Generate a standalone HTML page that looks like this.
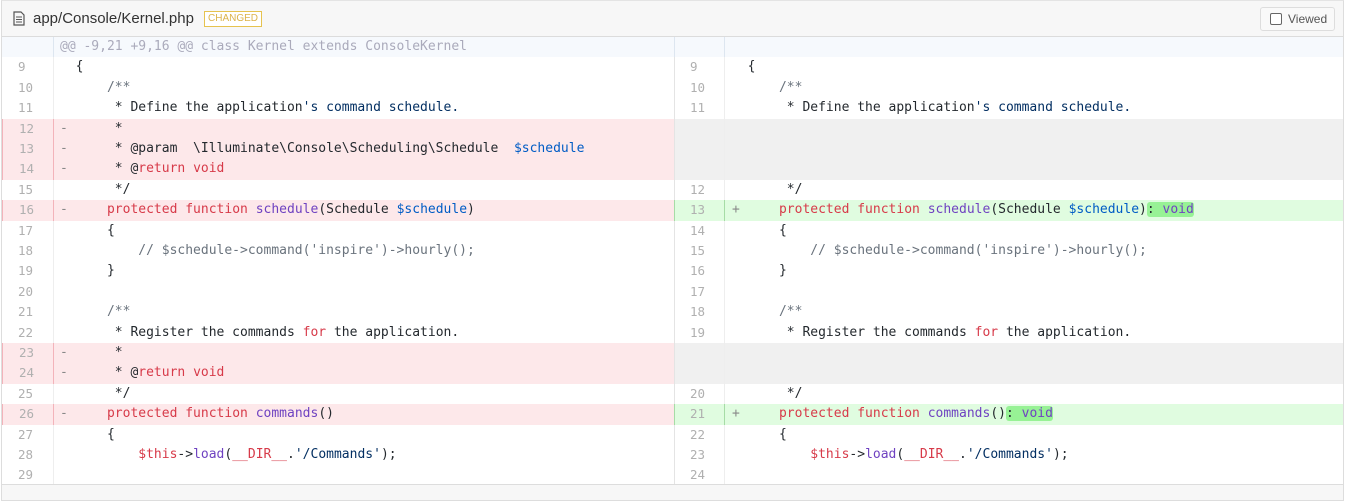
<!DOCTYPE html>
<html><head><meta charset="utf-8"><style>
*{box-sizing:border-box;margin:0;padding:0}
body{width:1345px;height:501px;background:#fff;overflow:hidden;font-family:"Liberation Sans",sans-serif}
.box{position:absolute;left:1px;top:0;width:1343px;height:501px;border:1px solid #ddd;border-top:1px solid #e4e4e4;background:#f7f7f7}
.hdr{position:absolute;left:0;top:0;width:1341px;height:36px;background:#f7f7f7;border-bottom:1px solid #dcdcdc}
.fname{position:absolute;left:31px;top:9px;font-size:15px;color:#333}
.badge{position:absolute;left:202px;top:10px;height:16px;border:1px solid #e6c34f;color:#dcb34a;font-size:10px;line-height:14px;padding:0 3px;background:#fff}
.view{position:absolute;left:1258px;top:6px;width:75px;height:24px;border:1px solid #ddd;border-radius:3px;background:#f9f9f9;font-size:12px;color:#555;line-height:22px;padding-left:27px}
.view i{position:absolute;left:9px;top:5px;width:12px;height:12px;border:1.5px solid #666;border-radius:2px;background:#fff}
.diff{position:absolute;left:0;top:36px;width:1341px;height:448px;background:#fff;border-bottom:1px solid #ddd}
.row{position:absolute;left:0;width:1341px;height:20.4px;font-family:"DejaVu Sans Mono",monospace;font-size:13px;line-height:20.4px;white-space:pre;color:#24292e}
.c{position:absolute;top:0;height:100%;overflow:hidden}
.ln{color:#b0b0b0;font-size:12.5px}
.l1{left:0;width:52px;padding-left:16px;border-right:1px solid #eee}
.l2{left:52px;width:620px;padding-left:6px}
.r1{left:672px;width:51px;padding-left:15px;border-left:1px solid #e4e4e4;border-right:1px solid #eee}
.r2{left:723px;width:618px;padding-left:7px}
.del{background:#fde8ea}
.l1.del{border-left:1px solid #f3b3ba;border-right:1px solid #f3b3ba}
.add{background:#e0fce0}
.r1.add{border-right:1px solid #a6dca6;border-left:1px solid #a6dca6}
.emp{background:#f0f0f0}
.hunk{background:#f6f9fd;color:#aab}
.k{color:#d73a49}.f{color:#6f42c1}.v{color:#005cc5}.s{color:#032f62}.cm{color:#6a737d}.m{color:#888}
.hl{background:#97f295;border-radius:3px}
</style></head><body>
<div class="box">
<div class="hdr">
<svg style="position:absolute;left:11px;top:10px" width="12" height="15" viewBox="0 0 12 15"><path d="M1 1h7l3 3v10H1z" fill="none" stroke="#555" stroke-width="1.2"/><path d="M3 6h6M3 8.5h6M3 11h6" stroke="#555" stroke-width="1.1"/></svg>
<div class="fname">app/Console/Kernel.php</div>
<div class="badge">CHANGED</div>
<div class="view"><i></i>Viewed</div>
</div>
<div class="diff">
<div class="row" style="top:0"><div class="c l1 hunk" style="border-right:1px solid #dde6f0"></div><div class="c l2 hunk">@@ -9,21 +9,16 @@ class Kernel extends ConsoleKernel</div><div class="c r1 hunk" style="border-left:1px solid #dde6f0;border-right:1px solid #dde6f0"></div><div class="c r2 hunk"></div></div>

<div class="row" style="top:20.4px"><div class="c l1 ln">9</div><div class="c l2">  {</div><div class="c r1 ln">9</div><div class="c r2">  {</div></div>
<div class="row" style="top:40.8px"><div class="c l1 ln">10</div><div class="c l2"><span class="cm">      /**</span></div><div class="c r1 ln">10</div><div class="c r2"><span class="cm">      /**</span></div></div>
<div class="row" style="top:61.2px"><div class="c l1 ln">11</div><div class="c l2">       * Define the application<span class="s">'s command schedule.</span></div><div class="c r1 ln">11</div><div class="c r2">       * Define the application<span class="s">'s command schedule.</span></div></div>
<div class="row" style="top:81.6px"><div class="c l1 ln del">12</div><div class="c l2 del"><span class="m">-</span>      *</div><div class="c r1 emp"></div><div class="c r2 emp"></div></div>
<div class="row" style="top:102px"><div class="c l1 ln del">13</div><div class="c l2 del"><span class="m">-</span>      * @param  \Illuminate\Console\Scheduling\Schedule  <span class="v">$schedule</span></div><div class="c r1 emp"></div><div class="c r2 emp"></div></div>
<div class="row" style="top:122.4px"><div class="c l1 ln del">14</div><div class="c l2 del"><span class="m">-</span>      * @<span class="k">return void</span></div><div class="c r1 emp"></div><div class="c r2 emp"></div></div>
<div class="row" style="top:142.8px"><div class="c l1 ln">15</div><div class="c l2">       */</div><div class="c r1 ln">12</div><div class="c r2">       */</div></div>
<div class="row" style="top:163.2px"><div class="c l1 ln del">16</div><div class="c l2 del"><span class="m">-</span>     <span class="k">protected function</span> <span class="f">schedule</span>(Schedule <span class="v">$schedule</span>)</div><div class="c r1 ln add">13</div><div class="c r2 add"><span class="m">+</span>     <span class="k">protected function</span> <span class="f">schedule</span>(Schedule <span class="v">$schedule</span>)<span class="hl">: <span class="f">void</span></span></div></div>
<div class="row" style="top:183.6px"><div class="c l1 ln">17</div><div class="c l2">      {</div><div class="c r1 ln">14</div><div class="c r2">      {</div></div>
<div class="row" style="top:204px"><div class="c l1 ln">18</div><div class="c l2"><span class="cm">          // $schedule-&gt;command('inspire')-&gt;hourly();</span></div><div class="c r1 ln">15</div><div class="c r2"><span class="cm">          // $schedule-&gt;command('inspire')-&gt;hourly();</span></div></div>
<div class="row" style="top:224.4px"><div class="c l1 ln">19</div><div class="c l2">      }</div><div class="c r1 ln">16</div><div class="c r2">      }</div></div>
<div class="row" style="top:244.8px"><div class="c l1 ln">20</div><div class="c l2"></div><div class="c r1 ln">17</div><div class="c r2"></div></div>
<div class="row" style="top:265.2px"><div class="c l1 ln">21</div><div class="c l2"><span class="cm">      /**</span></div><div class="c r1 ln">18</div><div class="c r2"><span class="cm">      /**</span></div></div>
<div class="row" style="top:285.6px"><div class="c l1 ln">22</div><div class="c l2">       * Register the commands <span class="k">for</span> the application.</div><div class="c r1 ln">19</div><div class="c r2">       * Register the commands <span class="k">for</span> the application.</div></div>
<div class="row" style="top:306px"><div class="c l1 ln del">23</div><div class="c l2 del"><span class="m">-</span>      *</div><div class="c r1 emp"></div><div class="c r2 emp"></div></div>
<div class="row" style="top:326.4px"><div class="c l1 ln del">24</div><div class="c l2 del"><span class="m">-</span>      * @<span class="k">return void</span></div><div class="c r1 emp"></div><div class="c r2 emp"></div></div>
<div class="row" style="top:346.8px"><div class="c l1 ln">25</div><div class="c l2">       */</div><div class="c r1 ln">20</div><div class="c r2">       */</div></div>
<div class="row" style="top:367.2px"><div class="c l1 ln del">26</div><div class="c l2 del"><span class="m">-</span>     <span class="k">protected function</span> <span class="f">commands</span>()</div><div class="c r1 ln add">21</div><div class="c r2 add"><span class="m">+</span>     <span class="k">protected function</span> <span class="f">commands</span>()<span class="hl">: <span class="f">void</span></span></div></div>
<div class="row" style="top:387.6px"><div class="c l1 ln">27</div><div class="c l2">      {</div><div class="c r1 ln">22</div><div class="c r2">      {</div></div>
<div class="row" style="top:408px"><div class="c l1 ln">28</div><div class="c l2">          <span class="k">$this</span>-&gt;<span class="f">load</span>(<span class="k">__DIR__</span>.<span class="s">'/Commands'</span>);</div><div class="c r1 ln">23</div><div class="c r2">          <span class="k">$this</span>-&gt;<span class="f">load</span>(<span class="k">__DIR__</span>.<span class="s">'/Commands'</span>);</div></div>
<div class="row" style="top:428.4px;height:19px"><div class="c l1 ln">29</div><div class="c l2"></div><div class="c r1 ln">24</div><div class="c r2"></div></div>
</div>
</div>
</body></html>
